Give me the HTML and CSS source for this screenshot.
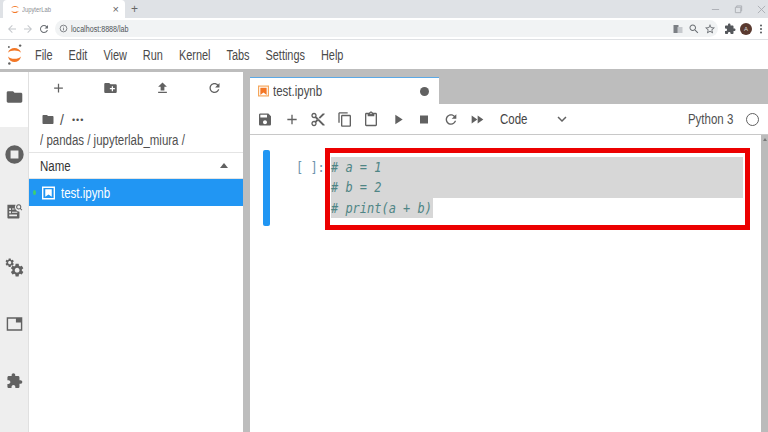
FILE: index.html
```html
<!DOCTYPE html>
<html lang="en">
<head>
<meta charset="utf-8">
<title>JupyterLab</title>
<link rel="stylesheet" href="styles.css">
</head>
<body>
<div class="page">
  <header class="tabstrip">
    <div class="browser-tab">
      <svg class="favicon" viewBox="0 0 16 16"><path d="M2 6c2-5 10-5 12 0-3-2.500-9-2.500-12 0z" fill="#f37726"/><path d="M2 10c2 5 10 5 12 0-3 2.500-9 2.500-12 0z" fill="#f37726"/></svg>
      <span class="browser-tab-title">JupyterLab</span>
      <span class="browser-tab-close">×</span>
    </div>
    <span class="new-tab">+</span>
    <div class="window-controls">
      <svg class="win" viewBox="0 0 10 10"><path d="M1 5h8" stroke="#a9adb2" fill="none"/></svg>
      <svg class="win" viewBox="0 0 10 10"><path d="M1.500 2.500h6v6h-6zM3 2.500V1h5.500v5.500H7.500" stroke="#a9adb2" fill="none"/></svg>
      <svg class="win" viewBox="0 0 10 10"><path d="M1 1l8 8M9 1l-8 8" stroke="#a9adb2" fill="none"/></svg>
    </div>
  </header>
  <div class="addressbar">
    <svg class="nav nav-faint" viewBox="0 0 24 24"><path d="M20 11H7.800l5.600-5.600L12 4l-8 8 8 8 1.400-1.400L7.800 13H20z"/></svg>
    <svg class="nav nav-faint" viewBox="0 0 24 24"><path d="M4 11h12.200l-5.600-5.600L12 4l8 8-8 8-1.400-1.400 5.600-5.600H4z"/></svg>
    <svg class="nav" viewBox="0 0 24 24"><path d="M17.650 6.350C16.200 4.900 14.210 4 12 4c-4.420 0-7.990 3.580-7.990 8s3.570 8 7.990 8c3.730 0 6.840-2.550 7.730-6h-2.080c-.82 2.330-3.040 4-5.650 4-3.310 0-6-2.690-6-6s2.690-6 6-6c1.660 0 3.140.69 4.220 1.780L13 11h7V4l-2.350 2.350z"/></svg>
    <div class="omnibox">
      <svg class="info" viewBox="0 0 12 12"><circle cx="6" cy="6" r="4.500" fill="none" stroke="#5f6368"/><path d="M6 5.500v3M6 3.500v1" stroke="#5f6368"/></svg>
      <span class="url">localhost:8888/lab</span>
      <span class="omni-icons">
        <svg class="nav" viewBox="0 0 24 24"><path d="M3 4h10v16H3z" fill="#7b7f84"/><path d="M11 8h10v12H11z" fill="#c6c9cd"/></svg>
        <svg class="nav" viewBox="0 0 24 24"><path d="M15.500 14h-.79l-.28-.27C15.410 12.590 16 11.110 16 9.500 16 5.910 13.090 3 9.500 3S3 5.910 3 9.500 5.910 16 9.500 16c1.610 0 3.090-.59 4.230-1.570l.27.28v.79l5 4.990L20.490 19l-4.990-5zm-6 0C7.010 14 5 11.990 5 9.500S7.010 5 9.500 5 14 7.010 14 9.500 11.990 14 9.500 14z"/></svg>
        <svg class="nav" viewBox="0 0 24 24"><path d="M22 9.240l-7.190-.62L12 2 9.190 8.630 2 9.240l5.460 4.730L5.820 21 12 17.270 18.180 21l-1.630-7.030L22 9.240zM12 15.400l-3.760 2.270 1-4.280-3.320-2.880 4.380-.38L12 6.100l1.710 4.040 4.380.38-3.320 2.880 1 4.280L12 15.400z"/></svg>
      </span>
    </div>
    <svg class="nav nav-dark" viewBox="0 0 24 24"><path d="M20.500 11H19V7c0-1.100-.9-2-2-2h-4V3.500C13 2.120 11.880 1 10.500 1S8 2.120 8 3.500V5H4c-1.100 0-1.990.9-1.990 2v3.800H3.500c1.490 0 2.700 1.210 2.700 2.700s-1.210 2.700-2.700 2.700H2V20c0 1.100.9 2 2 2h3.800v-1.500c0-1.490 1.210-2.700 2.700-2.700 1.490 0 2.700 1.210 2.700 2.700V22H17c1.100 0 2-.9 2-2v-4h1.500c1.380 0 2.500-1.120 2.500-2.500S21.880 11 20.500 11z"/></svg>
    <span class="avatar">A</span>
    <svg class="nav nav-last" viewBox="0 0 24 24"><circle cx="12" cy="5" r="2"/><circle cx="12" cy="12" r="2"/><circle cx="12" cy="19" r="2"/></svg>
  </div>
  <nav class="menubar">
    <svg class="lab-logo" viewBox="0 0 16 22">
      <path d="M1 9C3 2.500 13 2.500 15 9 12 6 4 6 1 9z" fill="#f37726"/>
      <path d="M1 13C3 21 13 21 15 13 12 16.500 4 16.500 1 13z" fill="#f37726"/>
      <circle cx="14" cy="1.500" r="1.300" fill="#616161"/>
      <circle cx="2" cy="3" r="1" fill="#616161"/>
      <circle cx="2.500" cy="20.500" r="1.300" fill="#616161"/>
    </svg>
    <div class="menu-items">
      <span class="menu-item">File</span>
      <span class="menu-item">Edit</span>
      <span class="menu-item">View</span>
      <span class="menu-item">Run</span>
      <span class="menu-item">Kernel</span>
      <span class="menu-item">Tabs</span>
      <span class="menu-item">Settings</span>
      <span class="menu-item">Help</span>
    </div>
  </nav>
  <div class="lab">
    <aside class="sidebar">
      <div class="side-cell side-active">
        <svg class="side-icon" viewBox="0 0 24 24"><path d="M10 4H3c-1.100 0-2 .9-2 2v12c0 1.100.9 2 2 2h18c1.100 0 2-.9 2-2V8c0-1.100-.9-2-2-2h-9l-2-2z"/></svg>
      </div>
      <div class="side-cell">
        <svg class="side-icon side-icon-large" viewBox="0 0 24 24"><path fill-rule="evenodd" d="M12 1.500a10.500 10.500 0 1 0 0 21 10.500 10.500 0 0 0 0-21zM7.500 7.500h9v9h-9z"/></svg>
      </div>
      <div class="side-cell">
        <svg class="side-icon" viewBox="0 0 24 24"><path d="M2 3h11.500a6.500 6.500 0 0 0 5.500 10v8c0 1-.8 1.500-1.500 1.500H3.500C2.700 22.500 2 22 2 21zM4.500 8v2.500H7V8zm4 .5V10H12V8.500zm-4 4V15H7v-2.500zm4 .5v1.500h7.500V13zm-4 4v2.500h11V17z"/><path d="M18 2.500a3.700 3.700 0 1 0 2 6.800l2 2 1-1-2-2A3.700 3.700 0 0 0 18 2.500zm0 1.500a2.200 2.200 0 1 1 0 4.400 2.200 2.200 0 0 1 0-4.400z"/></svg>
      </div>
      <div class="side-cell">
        <svg class="side-icon side-icon-large" viewBox="0 0 24 24">
          <g transform="translate(6 6) scale(.75)"><path d="M19.140 12.940c.04-.3.060-.61.060-.94 0-.32-.02-.64-.07-.94l2.030-1.580c.18-.14.230-.41.120-.61l-1.920-3.320c-.12-.22-.37-.29-.59-.22l-2.390.96c-.5-.38-1.030-.7-1.620-.94l-.36-2.540c-.04-.24-.24-.41-.48-.41h-3.840c-.24 0-.43.170-.47.410l-.36 2.540c-.59.240-1.130.570-1.620.940l-2.390-.96c-.22-.08-.47 0-.59.220L2.740 8.870c-.12.210-.08.470.12.610l2.030 1.580c-.05.300-.09.630-.09.940s.02.640.07.940l-2.030 1.580c-.18.140-.23.410-.12.610l1.920 3.320c.12.220.37.290.59.220l2.390-.96c.5.380 1.030.7 1.620.94l.36 2.540c.05.240.24.410.48.410h3.840c.24 0 .44-.17.47-.41l.36-2.540c.59-.24 1.130-.56 1.620-.94l2.390.96c.22.080.47 0 .59-.22l1.920-3.320c.12-.22.070-.47-.12-.61l-2.010-1.580zM12 15.600c-1.980 0-3.600-1.620-3.600-3.600s1.620-3.600 3.600-3.600 3.600 1.620 3.600 3.600-1.620 3.600-3.600 3.600z"/></g>
          <g transform="translate(.5 .5) scale(.5)"><path d="M19.140 12.940c.04-.3.060-.61.060-.94 0-.32-.02-.64-.07-.94l2.030-1.580c.18-.14.230-.41.120-.61l-1.920-3.320c-.12-.22-.37-.29-.59-.22l-2.390.96c-.5-.38-1.030-.7-1.620-.94l-.36-2.540c-.04-.24-.24-.41-.48-.41h-3.840c-.24 0-.43.170-.47.410l-.36 2.540c-.59.240-1.130.570-1.620.940l-2.390-.96c-.22-.08-.47 0-.59.220L2.740 8.870c-.12.210-.08.470.12.610l2.030 1.580c-.05.300-.09.630-.09.940s.02.640.07.940l-2.030 1.580c-.18.140-.23.410-.12.610l1.920 3.320c.12.220.37.290.59.220l2.390-.96c.5.380 1.030.7 1.620.94l.36 2.540c.05.240.24.410.48.410h3.840c.24 0 .44-.17.47-.41l.36-2.540c.59-.24 1.130-.56 1.620-.94l2.390.96c.22.080.47 0 .59-.22l1.920-3.320c.12-.22.070-.47-.12-.61l-2.010-1.580zM12 15.600c-1.980 0-3.600-1.620-3.600-3.600s1.620-3.600 3.600-3.600 3.600 1.620 3.600 3.600-1.620 3.600-3.600 3.600z"/></g>
        </svg>
      </div>
      <div class="side-cell">
        <svg class="side-icon" viewBox="0 0 24 24"><path fill-rule="evenodd" d="M1 2.500h22v19H1zM3 4.500v15h18V10h-7V4.500z"/></svg>
      </div>
      <div class="side-cell">
        <svg class="side-icon" viewBox="0 0 24 24"><path d="M20.500 11H19V7c0-1.100-.9-2-2-2h-4V3.500C13 2.120 11.880 1 10.500 1S8 2.120 8 3.500V5H4c-1.100 0-1.990.9-1.990 2v3.800H3.500c1.490 0 2.700 1.210 2.700 2.700s-1.210 2.700-2.700 2.700H2V20c0 1.100.9 2 2 2h3.800v-1.500c0-1.490 1.210-2.700 2.700-2.700 1.490 0 2.700 1.210 2.700 2.700V22H17c1.100 0 2-.9 2-2v-4h1.500c1.380 0 2.500-1.120 2.500-2.500S21.880 11 20.500 11z"/></svg>
      </div>
    </aside>
    <section class="filepanel">
      <div class="file-tools">
        <svg class="tool" viewBox="0 0 24 24"><path d="M19 13h-6v6h-2v-6H5v-2h6V5h2v6h6v2z"/></svg>
        <svg class="tool" viewBox="0 0 24 24"><path d="M20 6h-8l-2-2H4c-1.110 0-1.990.89-1.990 2L2 18c0 1.110.89 2 2 2h16c1.110 0 2-.89 2-2V8c0-1.110-.89-2-2-2zm-1 8h-3v3h-2v-3h-3v-2h3V9h2v3h3v2z"/></svg>
        <svg class="tool" viewBox="0 0 24 24"><path d="M9 16h6v-6h4l-7-7-7 7h4v6zm-4 2h14v2H5z"/></svg>
        <svg class="tool" viewBox="0 0 24 24"><path d="M17.650 6.350C16.200 4.900 14.210 4 12 4c-4.420 0-7.990 3.580-7.990 8s3.570 8 7.990 8c3.730 0 6.840-2.550 7.730-6h-2.080c-.82 2.330-3.040 4-5.650 4-3.310 0-6-2.690-6-6s2.690-6 6-6c1.660 0 3.140.69 4.220 1.780L13 11h7V4l-2.350 2.350z"/></svg>
      </div>
      <div class="crumbs">
        <svg class="crumb-folder" viewBox="0 0 24 20"><path d="M10 1H3C1.900 1 1 1.900 1 3v14c0 1.100.9 2 2 2h18c1.100 0 2-.9 2-2V5c0-1.100-.9-2-2-2h-9l-2-2z"/></svg>
        <span>/</span>
        <span class="dots">•••</span>
      </div>
      <div class="crumb-path"><span class="narrow">/ pandas / jupyterlab_miura /</span></div>
      <div class="list-head">
        <span class="name-col narrow">Name</span>
        <span class="caret"></span>
      </div>
      <div class="file-row">
        <span class="running"></span>
        <svg class="nb-icon" viewBox="0 0 14 14"><path fill-rule="evenodd" d="M0 0h14v14H0zM1.500 1.500v11h11v-11zM3.500 3h7v8L7 8.500 3.500 11z" fill="#fff"/></svg>
        <span class="file-name narrow">test.ipynb</span>
      </div>
    </section>
    <div class="splitter"></div>
    <main class="main">
      <div class="doc-tabs">
        <div class="doc-tab">
          <svg class="nb-tab-icon" viewBox="0 0 14 14"><path d="M0 0h14v14H0z" fill="#f5a65b"/><path d="M1.500 1.500h11v11h-11z" fill="#fff"/><path d="M3 3h8v9L7 9l-4 3z" fill="#f37726"/></svg>
          <span class="doc-title narrow">test.ipynb</span>
          <span class="dirty"></span>
        </div>
      </div>
      <div class="nb-toolbar">
        <svg class="tb" viewBox="0 0 24 24"><path d="M17 3H5c-1.110 0-2 .9-2 2v14c0 1.100.89 2 2 2h14c1.100 0 2-.9 2-2V7l-4-4zm-5 16c-1.660 0-3-1.340-3-3s1.340-3 3-3 3 1.340 3 3-1.340 3-3 3zm3-10H5V5h10v4z"/></svg>
        <svg class="tb" viewBox="0 0 24 24"><path d="M19 13h-6v6h-2v-6H5v-2h6V5h2v6h6v2z"/></svg>
        <svg class="tb" viewBox="0 0 24 24"><path d="M9.640 7.640c.23-.5.36-1.050.36-1.640 0-2.210-1.790-4-4-4S2 3.790 2 6s1.790 4 4 4c.59 0 1.140-.13 1.640-.36L10 12l-2.360 2.360C7.140 14.130 6.590 14 6 14c-2.210 0-4 1.790-4 4s1.790 4 4 4 4-1.790 4-4c0-.59-.13-1.140-.36-1.640L12 14l7 7h3v-1L9.640 7.640zM6 8c-1.100 0-2-.89-2-2s.9-2 2-2 2 .89 2 2-.9 2-2 2zm0 12c-1.100 0-2-.89-2-2s.9-2 2-2 2 .89 2 2-.9 2-2 2zm6-7.500c-.28 0-.5-.22-.5-.5s.22-.5.5-.5.5.22.5.5-.22.5-.5.5zM19 3l-6 6 2 2 7-7V3z"/></svg>
        <svg class="tb" viewBox="0 0 24 24"><path d="M16 1H4c-1.100 0-2 .9-2 2v14h2V3h12V1zm3 4H8c-1.100 0-2 .9-2 2v14c0 1.100.9 2 2 2h11c1.100 0 2-.9 2-2V7c0-1.100-.9-2-2-2zm0 16H8V7h11v14z"/></svg>
        <svg class="tb" viewBox="0 0 24 24"><path d="M19 2h-4.180C14.400.84 13.300 0 12 0c-1.300 0-2.400.84-2.820 2H5c-1.100 0-2 .9-2 2v16c0 1.100.9 2 2 2h14c1.100 0 2-.9 2-2V4c0-1.100-.9-2-2-2zm-7 0c.55 0 1 .45 1 1s-.45 1-1 1-1-.45-1-1 .45-1 1-1zm7 18H5V4h2v3h10V4h2v16z"/></svg>
        <svg class="tb" viewBox="0 0 24 24"><path d="M8 5v14l11-7z"/></svg>
        <svg class="tb" viewBox="0 0 24 24"><path d="M6 6h12v12H6z"/></svg>
        <svg class="tb" viewBox="0 0 24 24"><path d="M17.650 6.350C16.200 4.900 14.210 4 12 4c-4.420 0-7.990 3.580-7.990 8s3.570 8 7.990 8c3.730 0 6.840-2.550 7.730-6h-2.080c-.82 2.330-3.040 4-5.650 4-3.310 0-6-2.690-6-6s2.690-6 6-6c1.660 0 3.140.69 4.220 1.780L13 11h7V4l-2.350 2.350z"/></svg>
        <svg class="tb" viewBox="0 0 24 24"><path d="M4 18l8.500-6L4 6v12zm9-12v12l8.500-6L13 6z"/></svg>
        <span class="cell-type narrow">Code</span>
        <svg class="chevron" viewBox="0 0 24 24"><path d="M7.410 8.590L12 13.170l4.590-4.580L18 10l-6 6-6-6z"/></svg>
        <span class="kernel">Python 3</span>
        <span class="kernel-status"></span>
      </div>
      <div class="notebook">
        <div class="cell">
          <div class="cell-bar"></div>
          <div class="prompt"><span class="mono">[&nbsp;]:</span></div>
          <div class="editor">
            <div class="line line-full"><span class="mono code">#&nbsp;a&nbsp;=&nbsp;1</span></div>
            <div class="line line-full"><span class="mono code">#&nbsp;b&nbsp;=&nbsp;2</span></div>
            <div class="line line-part"><span class="mono code">#&nbsp;print(a&nbsp;+&nbsp;b)</span></div>
          </div>
          <div class="highlight-box"></div>
        </div>
        <div class="scrollbar"><span class="scroll-arrow"></span></div>
      </div>
    </main>
  </div>
</div>
</body>
</html>
```

FILE: styles.css
```css
* { box-sizing: border-box; }
html, body { margin: 0; padding: 0; }
body { background: #fff; }
.page {
  width: 768px; height: 432px; overflow: hidden;
  display: flex; flex-direction: column;
  font-family: "Liberation Sans", sans-serif;
  color: #505050;
}

/* the reference is squeezed horizontally, so its text is condensed */
.narrow { display: inline-block; white-space: nowrap; transform: scaleX(.82); transform-origin: left center; }

/* browser chrome */
.tabstrip { height: 18px; flex: none; display: flex; align-items: stretch; background: #dfe2e6; }
.browser-tab {
  width: 122px; margin-left: 3px; padding: 0 6px 0 7px;
  display: flex; align-items: center; gap: 2px;
  background: #fff; border-radius: 4px 4px 0 0;
}
.favicon { width: 10px; height: 11px; flex: none; }
.browser-tab-title { flex: 1; font-size: 7.500px; color: #8b8f94; white-space: nowrap; transform: scaleX(.78); transform-origin: left center; }
.browser-tab-close { font-size: 11px; color: #666; }
.new-tab { margin-left: 6px; align-self: center; font-size: 12px; color: #666; }
.window-controls { margin-left: auto; display: flex; align-items: center; gap: 14px; padding: 0 2px 0 0; }
.win { width: 9px; height: 9px; }

.addressbar { height: 22px; flex: none; display: flex; align-items: center; padding: 0 0 0 4px; background: #fff; border-bottom: 1px solid #dfe1e4; }
.nav { width: 12px; height: 12px; fill: #6a6e73; flex: none; margin: 0 2px; }
.nav-faint { fill: #c4c7cb; }
.nav-dark { fill: #55585c; margin: 0 4px; }
.nav-last { fill: #55585c; margin: 0 0 0 2px; }
.omnibox { width: 663px; height: 17px; margin: 0 2px 0 3px; padding: 0 0 0 3px; display: flex; align-items: center; gap: 3px; background: #f1f3f4; border-radius: 9px; }
.info { width: 9px; height: 9px; flex: none; margin-left: 1px; }
.url { font-size: 8.500px; color: #50555a; white-space: nowrap; transform: scaleX(.84); transform-origin: left center; }
.omni-icons { margin-left: auto; display: flex; }
.avatar { width: 12px; height: 12px; margin: 0 1px 0 0; flex: none; border-radius: 50%; background: #5a3a30; color: #ddd; font-size: 6px; text-align: center; line-height: 12px; }

.menubar { height: 32px; flex: none; display: flex; align-items: center; padding: 0 0 0 7px; background: #fff; border-bottom: 3px solid #bdbdbd; }
.lab-logo { width: 15px; height: 21px; flex: none; margin-right: 13px; }
.menu-items { display: flex; gap: 20.500px; transform: scaleX(.78); transform-origin: left center; }
.menu-item { font-size: 14px; color: #4a4a4a; white-space: nowrap; }

/* lab shell */
.lab { flex: 1; min-height: 0; display: flex; }
.sidebar { width: 28px; flex: none; background: #eeeeee; display: flex; flex-direction: column; }
.side-cell { height: 56.500px; flex: none; display: flex; align-items: center; justify-content: center; }
.side-active { height: 54.500px; background: #fff; padding-bottom: 5px; }
.side-icon { width: 17px; height: 18px; fill: #616161; }
.side-icon-large { width: 21px; height: 21px; }

.filepanel { width: 215px; flex: none; background: #fff; border-left: 1px solid #e0e0e0; }
.file-tools { height: 31px; display: grid; grid-template-columns: repeat(4, 52px); padding-left: 3px; align-items: center; justify-items: center; }
.tool { width: 15px; height: 16px; fill: #616161; }
.crumbs { height: 29px; display: flex; align-items: center; gap: 6px; padding: 4px 0 0 13px; font-size: 14px; }
.crumb-folder { width: 12px; height: 11px; fill: #616161; }
.dots { font-size: 9px; letter-spacing: 1px; margin-left: 2px; }
.crumb-path { height: 21px; padding-left: 11px; font-size: 14px; line-height: 16px; border-bottom: 1px solid #e4e4e4; }
.list-head { height: 26px; display: flex; align-items: center; justify-content: space-between; padding: 0 15px 0 11px; border-bottom: 1px solid #e4e4e4; font-size: 14px; color: #333; }
.caret { width: 0; height: 0; border-left: 4px solid transparent; border-right: 4px solid transparent; border-bottom: 5px solid #616161; }
.file-row { height: 27px; display: flex; align-items: center; background: #2196f3; padding-left: 4px; }
.running { width: 3px; height: 5px; border-radius: 50%; background: #3ecf6e; margin-right: 6px; flex: none; }
.nb-icon { width: 13px; height: 14px; margin-right: 6px; flex: none; }
.file-name { color: #fff; font-size: 14px; }

.splitter { width: 7px; flex: none; background: #bdbdbd; }

.main { flex: 1; min-width: 0; display: flex; flex-direction: column; }
.doc-tabs { height: 32px; flex: none; background: #bdbdbd; padding-top: 5px; }
.doc-tab { width: 189px; height: 27px; background: #fff; border-top: 1px solid #5ba9e6; display: flex; align-items: center; padding: 0 10px 0 8px; }
.nb-tab-icon { width: 11px; height: 14px; margin-right: 4px; flex: none; }
.doc-title { flex: 1; font-size: 14px; color: #4a4a4a; }
.dirty { width: 9px; height: 9px; border-radius: 50%; background: #616161; flex: none; }

.nb-toolbar { height: 31px; flex: none; display: flex; align-items: center; gap: 10.500px; padding: 0 0 0 7px; background: #fff; border-bottom: 1px solid #c8c8c8; }
.tb { width: 16px; height: 17px; fill: #616161; flex: none; }
.cell-type { margin-left: 4.500px; font-size: 14px; color: #444; }
.chevron { width: 18px; height: 18px; fill: #616161; margin-left: 9.500px; flex: none; }
.kernel { margin-left: auto; font-size: 14px; color: #505050; white-space: nowrap; transform: scaleX(.82); transform-origin: right center; }
.kernel-status { width: 13px; height: 13px; margin: 0 9px 0 2.500px; border: 1.500px solid #616161; border-radius: 50%; flex: none; }

.notebook { flex: 1; min-height: 0; display: flex; }
.cell { flex: 1; position: relative; display: flex; align-items: flex-start; padding: 15px 0 0 13px; }
.cell-bar { width: 7px; height: 76px; background: #2196f3; border-radius: 2px; flex: none; }
.prompt { width: 61px; flex: none; padding: 7px 0 0 26px; line-height: 20px; color: #6f94ad; white-space: nowrap; }
.mono {
  display: inline-block; font-family: "DejaVu Sans Mono", monospace;
  font-size: 14.600px; line-height: 20px; white-space: nowrap;
  transform: scaleX(.82); transform-origin: left center;
}
.editor { width: 412px; flex: none; margin-top: 7px; }
.line { height: 20.300px; }
.line-full { background: #d7d7d7; }
.line-part { width: 102px; background: #d7d7d7; }
.code { font-style: italic; color: #4f8585; }
.highlight-box { position: absolute; left: 75px; top: 13px; width: 425px; height: 82px; border: 5px solid #ec0000; }
.scrollbar { width: 7px; flex: none; background: #bbbbbb; position: relative; }
.scroll-arrow { position: absolute; left: 2px; top: 3px; width: 0; height: 0; border-left: 2px solid transparent; border-right: 2px solid transparent; border-bottom: 3px solid #777; }
```
